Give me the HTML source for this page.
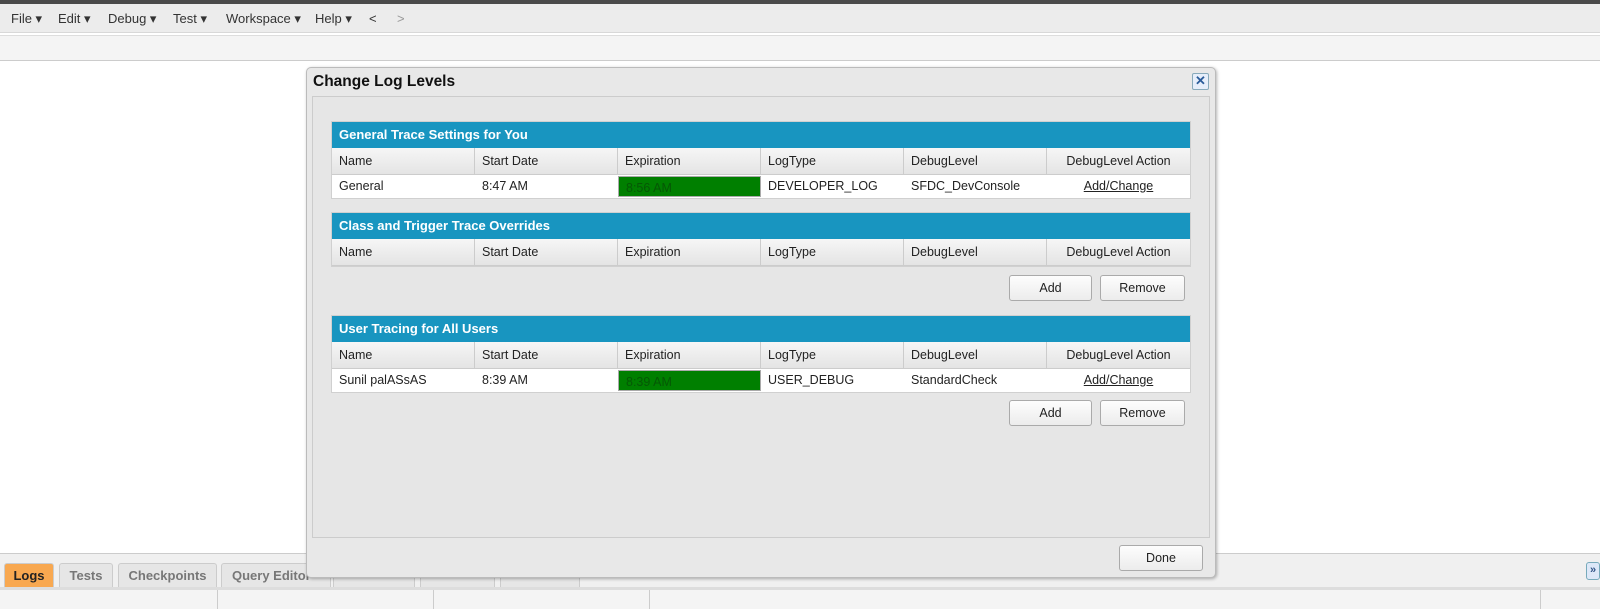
<!DOCTYPE html>
<html><head><style>
*{box-sizing:border-box;margin:0;padding:0}
body{width:1600px;height:609px;position:relative;overflow:hidden;background:#fff;font-family:"Liberation Sans",sans-serif;font-size:12.5px;color:#222}
.a{position:absolute}
.m{position:absolute;top:11px;font-size:13px;color:#333}
.hdr{background:#1895c0;color:#fff;font-weight:bold;font-size:13px;padding:5px 7px;height:26px}
.ch{display:flex;height:27px;background:linear-gradient(#f6f6f6,#e4e4e4);border-bottom:1px solid #ccc}
.ch div,.rw div{width:143.3px;padding:6px 7px;white-space:nowrap}
.ch div{border-right:1px solid #ccc}
.ch div:last-child{border-right:none;text-align:center}
.rw{display:flex;height:23px;background:#fff}
.rw div{padding:4px 7px}
.rw div:last-child{text-align:center;text-decoration:underline}
.g{background:#007f00;color:#055805;margin:1px 0;border:1px solid #aaa}
.btn{position:absolute;height:26px;border:1px solid #aaa;border-radius:3px;background:linear-gradient(#fdfdfd,#ececec);text-align:center;line-height:24px;font-size:12.5px}
.tab{position:absolute;top:563px;height:24px;border:1px solid #ccc;border-bottom:none;border-radius:3px 3px 0 0;background:#e6e6e6;color:#777;font-weight:bold;font-size:13px;text-align:center;line-height:23px;white-space:nowrap;overflow:hidden}
</style></head><body>
<div class="a" style="left:0;top:0;width:1600px;height:4px;background:#4a4a4a"></div>
<div class="a" style="left:0;top:4px;width:1600px;height:29px;background:#ececec;border-bottom:1px solid #d8d8d8"></div>
<div class="m" style="left:11px">File ▾</div>
<div class="m" style="left:58px">Edit ▾</div>
<div class="m" style="left:108px">Debug ▾</div>
<div class="m" style="left:173px">Test ▾</div>
<div class="m" style="left:226px">Workspace ▾</div>
<div class="m" style="left:315px">Help ▾</div>
<div class="m" style="left:369px">&lt;</div>
<div class="m" style="left:397px;color:#999">&gt;</div>
<div class="a" style="left:0;top:35px;width:1600px;height:26px;background:#f4f4f4;border-top:1px solid #ddd;border-bottom:1px solid #ccc"></div>
<div class="a" style="left:0;top:553px;width:1600px;height:56px;background:#f0f0f0;border-top:1px solid #ccc"></div>
<div class="a" style="left:0;top:587px;width:1600px;height:3px;background:#ddd"></div>
<div class="a" style="left:0;top:590px;width:1600px;height:19px;background:#f4f4f4"></div>
<div class="a" style="left:217px;top:590px;width:1px;height:19px;background:#ccc"></div>
<div class="a" style="left:433px;top:590px;width:1px;height:19px;background:#ccc"></div>
<div class="a" style="left:649px;top:590px;width:1px;height:19px;background:#ccc"></div>
<div class="a" style="left:1540px;top:590px;width:1px;height:19px;background:#ccc"></div>
<div class="tab" style="left:4px;width:50px;background:#f8a850;color:#222">Logs</div>
<div class="tab" style="left:59px;width:54px">Tests</div>
<div class="tab" style="left:118px;width:99px">Checkpoints</div>
<div class="tab" style="left:221px;width:110px;text-align:left;padding-left:10px">Query Editor</div>
<div class="tab" style="left:333px;width:82px"></div>
<div class="tab" style="left:420px;width:75px"></div>
<div class="tab" style="left:500px;width:80px"></div>
<div class="a" style="left:1586px;top:562px;width:14px;height:18px;border:1px solid #7ab;border-radius:3px;background:#dde8f8;color:#358;font-size:11px;line-height:14px;text-align:center;font-weight:bold">»</div>

<div class="a" style="left:306px;top:67px;width:910px;height:511px;background:#e8e8e8;border:1px solid #bbb;border-radius:5px;box-shadow:1px 1px 3px rgba(0,0,0,.3)"></div>
<div class="a" style="left:313px;top:73px;font-weight:bold;font-size:15.5px;color:#111">Change Log Levels</div>
<div class="a" style="left:1192px;top:73px;width:17px;height:17px;border:1px solid #8ab;border-radius:2px;background:#e6eefa;color:#2a5c9a;font-weight:bold;font-size:13px;line-height:14px;text-align:center">✕</div>
<div class="a" style="left:312px;top:96px;width:898px;height:442px;border:1px solid #ccc;background:#e6e6e6"></div>

<div class="a" style="left:331px;top:121px;width:860px;border:1px solid #d0d0d0">
<div class="hdr">General Trace Settings for You</div>
<div class="ch"><div>Name</div><div>Start Date</div><div>Expiration</div><div>LogType</div><div>DebugLevel</div><div>DebugLevel Action</div></div>
<div class="rw"><div>General</div><div>8:47 AM</div><div class="g">8:56 AM</div><div>DEVELOPER_LOG</div><div>SFDC_DevConsole</div><div>Add/Change</div></div>
</div>
<div class="a" style="left:331px;top:212px;width:860px;border:1px solid #d0d0d0">
<div class="hdr">Class and Trigger Trace Overrides</div>
<div class="ch"><div>Name</div><div>Start Date</div><div>Expiration</div><div>LogType</div><div>DebugLevel</div><div>DebugLevel Action</div></div>
</div>
<div class="btn" style="left:1009px;top:275px;width:83px">Add</div>
<div class="btn" style="left:1100px;top:275px;width:85px">Remove</div>
<div class="a" style="left:331px;top:315px;width:860px;border:1px solid #d0d0d0">
<div class="hdr">User Tracing for All Users</div>
<div class="ch"><div>Name</div><div>Start Date</div><div>Expiration</div><div>LogType</div><div>DebugLevel</div><div>DebugLevel Action</div></div>
<div class="rw"><div>Sunil palASsAS</div><div>8:39 AM</div><div class="g">8:39 AM</div><div>USER_DEBUG</div><div>StandardCheck</div><div>Add/Change</div></div>
</div>
<div class="btn" style="left:1009px;top:400px;width:83px">Add</div>
<div class="btn" style="left:1100px;top:400px;width:85px">Remove</div>
<div class="btn" style="left:1119px;top:545px;width:84px">Done</div>
</body></html>
